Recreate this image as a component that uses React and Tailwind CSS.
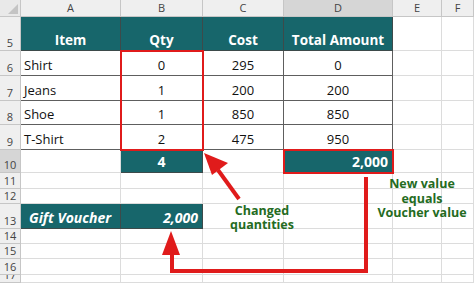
import React from "react";

const cols = ["A", "B", "C", "D", "E", "F"];
const rowNums = [5, 6, 7, 8, 9, 10, 11, 12, 13, 14, 15, 16, 17];

const data = {
  5: [
    { t: "Item", k: "head" },
    { t: "Qty", k: "head" },
    { t: "Cost", k: "head" },
    { t: "Total Amount", k: "head" },
  ],
  6: [{ t: "Shirt", k: "left" }, { t: "0", k: "c" }, { t: "295", k: "c" }, { t: "0", k: "c" }],
  7: [{ t: "Jeans", k: "left" }, { t: "1", k: "c" }, { t: "200", k: "c" }, { t: "200", k: "c" }],
  8: [{ t: "Shoe", k: "left" }, { t: "1", k: "c" }, { t: "850", k: "c" }, { t: "850", k: "c" }],
  9: [{ t: "T-Shirt", k: "left" }, { t: "2", k: "c" }, { t: "475", k: "c" }, { t: "950", k: "c" }],
  10: [{ t: "", k: "plainDark" }, { t: "4", k: "tealC" }, { t: "", k: "plainDark" }, { t: "2,000", k: "tealR" }],
  13: [{ t: "Gift Voucher", k: "tealItalL" }, { t: "2,000", k: "tealItalR" }],
};

function Cell({ cell }) {
  const base = "flex items-end pb-[2px] leading-[16px] overflow-hidden whitespace-nowrap";
  if (!cell) return <div className={`${base} border-r border-b border-[#dcdcdc] bg-white`} />;
  switch (cell.k) {
    case "head":
      return (
        <div className={`${base} justify-center bg-[#17666b] text-white font-bold text-[13.5px] border-r border-b border-[#3d4a4a]`}>
          {cell.t}
        </div>
      );
    case "left":
      return <div className={`${base} pl-[3px] bg-white text-[#111] text-[13px] border-r border-b border-[#5e5e5e]`}>{cell.t}</div>;
    case "c":
      return <div className={`${base} justify-center bg-white text-[#111] text-[13px] border-r border-b border-[#5e5e5e]`}>{cell.t}</div>;
    case "plainDark":
      return <div className={`${base} bg-white border-r border-b border-[#dcdcdc]`} />;
    case "tealC":
      return <div className={`${base} justify-center bg-[#17666b] text-white font-bold text-[14px] border-r border-b border-[#3d4a4a]`}>{cell.t}</div>;
    case "tealR":
      return <div className={`${base} justify-end pr-[4px] bg-[#17666b] text-white font-bold text-[14px] border-r border-b border-[#3d4a4a]`}>{cell.t}</div>;
    case "tealItalL":
      return <div className={`${base} pl-[8px] bg-[#17666b] text-white font-bold italic text-[14px] border-r border-b border-[#3d4a4a]`}>{cell.t}</div>;
    case "tealItalR":
      return <div className={`${base} justify-end pr-[4px] bg-[#17666b] text-white font-bold italic text-[14px] border-r border-b border-[#3d4a4a]`}>{cell.t}</div>;
    default:
      return <div className={`${base} border-r border-b border-[#dcdcdc] bg-white`} />;
  }
}

export default function App() {
  return (
    <div
      className="relative w-[474px] h-[283px] overflow-hidden bg-white"
      style={{ fontFamily: '"Open Sans", "Noto Sans", sans-serif' }}
    >
      <div className="grid grid-cols-[21px_100px_82px_81px_109px_49px_32px] grid-rows-[17px_34px_25px_25px_24px_25px_23px_16px_15px_25px_15px_15px_16px_8px]">
        {/* header row */}
        <div className="relative bg-[#e9e9e9] border-r border-b border-[#c6c6c6]">
          <div className="absolute right-[2px] bottom-[2px] w-0 h-0 border-l-[10px] border-l-transparent border-b-[10px] border-b-[#c4c4c4]" />
        </div>
        {cols.map((c) => (
          <div
            key={c}
            className={`flex items-center justify-center text-[11px] text-[#444] border-r border-b border-[#c6c6c6] ${c === "D" ? "bg-[#d6d6d6]" : "bg-[#efefef]"}`}
          >
            {c}
          </div>
        ))}
        {rowNums.map((r) => (
          <React.Fragment key={r}>
            <div
              className={`flex items-end justify-center overflow-hidden pb-[1px] text-[11px] leading-[13px] text-[#444] border-r border-b border-[#c6c6c6] ${r === 10 ? "bg-[#d6d6d6]" : "bg-[#efefef]"}`}
            >
              {r}
            </div>
            {cols.map((c, i) => (
              <Cell key={c} cell={data[r] ? data[r][i] : null} />
            ))}
          </React.Fragment>
        ))}
      </div>

      {/* red highlight boxes */}
      <div className="absolute left-[120px] top-[50px] w-[84px] h-[101px] border-2 border-[#e01b1b]" />
      <div className="absolute left-[283px] top-[149px] w-[111px] h-[25px] border-2 border-[#e01b1b]" />

      {/* arrows */}
      <svg className="absolute left-0 top-0" width="474" height="283" viewBox="0 0 474 283">
        <line x1="239" y1="199" x2="218" y2="170" stroke="#e01b1b" strokeWidth="4" />
        <polygon points="204,153 228,163 212,175" fill="#e01b1b" />
        <polyline points="366,177 366,271 172,271 172,252" fill="none" stroke="#e01b1b" strokeWidth="4" />
        <polygon points="171,231 180,255 162,255" fill="#e01b1b" />
      </svg>

      {/* annotations */}
      <div className="absolute left-[222px] top-[204px] w-[80px] flex flex-col items-center text-[#246b22] font-bold text-[12.5px] leading-[13.5px]">
        <span>Changed</span>
        <span>quantities</span>
      </div>
      <div className="absolute left-[372px] top-[177px] w-[100px] flex flex-col items-center text-[#246b22] font-bold text-[12.5px] leading-[14.5px]">
        <span>New value</span>
        <span>equals</span>
        <span>Voucher value</span>
      </div>
    </div>
  );
}
